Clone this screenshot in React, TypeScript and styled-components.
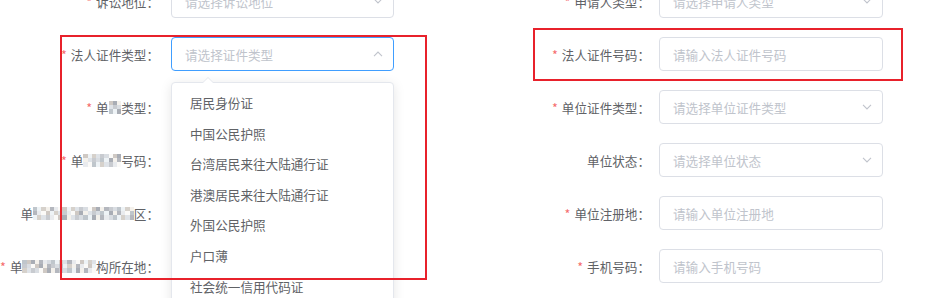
import React from 'react';
import styled, { createGlobalStyle } from 'styled-components';

const GlobalStyle = createGlobalStyle`
  html, body {
    margin: 0;
    padding: 0;
    background: #fff;
  }
  body {
    font-family: "Noto Sans CJK SC", "Noto Sans", sans-serif;
    overflow: hidden;
  }
`;

const Page = styled.div`
  position: relative;
  width: 945px;
  height: 298px;
  overflow: hidden;
`;

const Form = styled.div`
  display: grid;
  grid-template-columns: 394px 396px;
  column-gap: 93px;
  row-gap: 19px;
  margin-top: -16px;
`;

const Item = styled.div`
  display: flex;
  align-items: center;
  height: 34px;
`;

const Label = styled.label<{ $w: number; $gap: number; $required?: boolean }>`
  flex: 0 0 ${p => p.$w}px;
  width: ${p => p.$w}px;
  margin-right: ${p => p.$gap}px;
  display: flex;
  justify-content: flex-end;
  align-items: center;
  font-size: 12.6px;
  color: #606266;
  white-space: nowrap;

  &::before {
    content: ${p => (p.$required ? "'*'" : 'none')};
    color: #f56c6c;
    margin-right: 4px;
  }
`;

const Field = styled.div<{ $w: number; $focused?: boolean }>`
  position: relative;
  flex: 0 0 ${p => p.$w}px;
  width: ${p => p.$w}px;
  height: 34px;
  box-sizing: border-box;
  border: 1px solid ${p => (p.$focused ? '#409eff' : '#dcdfe6')};
  border-radius: 4px;
  background: #fff;
  display: flex;
  align-items: center;
  padding: 0 10px 0 13px;
  font-size: 12.6px;
  color: #c0c4cc;
`;

const Placeholder = styled.span`
  flex: 1;
  white-space: nowrap;
`;

const Chevron = styled.svg`
  width: 10px;
  height: 6px;
  flex: 0 0 auto;
`;

const Mosaic = styled.span<{ $cols: number }>`
  display: inline-grid;
  grid-template-columns: repeat(${p => p.$cols}, 1fr);
  grid-template-rows: repeat(3, 1fr);
  height: 13px;
`;

const Cell = styled.span<{ $c: string }>`
  background: ${p => p.$c};
`;

const Dropdown = styled.ul`
  position: absolute;
  top: calc(100% + 12px);
  left: -1px;
  width: 223px;
  box-sizing: border-box;
  margin: 0;
  padding: 5px 0;
  border: 1px solid #e4e7ed;
  border-radius: 4px;
  background: #fff;
  box-shadow: 0 2px 12px 0 rgba(0, 0, 0, 0.1);
  z-index: 5;

  &::before,
  &::after {
    content: '';
    position: absolute;
    left: 30px;
    border: 6px solid transparent;
    border-top-width: 0;
  }
  &::before {
    top: -6px;
    border-bottom-color: #e4e7ed;
  }
  &::after {
    top: -5px;
    border-bottom-color: #fff;
  }
`;

const Option = styled.li`
  list-style: none;
  height: 30.6px;
  line-height: 30.6px;
  padding: 0 18px;
  font-size: 12.6px;
  color: #606266;
  white-space: nowrap;
`;

const Highlight = styled.div`
  position: absolute;
  box-sizing: border-box;
  border: 2px solid #e8212b;
  pointer-events: none;
  z-index: 10;
`;

const PALETTE = [
  '#e9ebee', '#c8cbd0', '#b4b7be', '#dfe3e8', '#f4f1ec', '#d6d1cb',
  '#a9adb5', '#eef3f6', '#cfc9c4', '#bfc6cc', '#fbfaf8', '#d9dde2',
];

function Pixelated({ chars, seed }: { chars: number; seed: number }) {
  const cols = chars * 3;
  const cells = Array.from({ length: cols * 3 }, (_, i) => {
    const h = (i * 7919 + seed * 104729) % 9973;
    return PALETTE[h % PALETTE.length];
  });
  return (
    <Mosaic $cols={cols} style={{ width: chars * 12.6 }}>
      {cells.map((c, i) => <Cell key={i} $c={c} />)}
    </Mosaic>
  );
}

type Row = {
  label: Array<string | number>;
  required?: boolean;
  placeholder: string;
  select?: boolean;
  open?: boolean;
};

const OPTIONS = [
  '居民身份证',
  '中国公民护照',
  '台湾居民来往大陆通行证',
  '港澳居民来往大陆通行证',
  '外国公民护照',
  '户口薄',
  '社会统一信用代码证',
  '其他',
];

const LEFT: Row[] = [
  { label: ['诉讼地位'], required: true, placeholder: '请选择诉讼地位', select: true },
  { label: ['法人证件类型'], required: true, placeholder: '请选择证件类型', select: true, open: true },
  { label: ['单', 1, '类型'], required: true, placeholder: '请选择单位类型', select: true },
  { label: ['单', 3, '号码'], required: true, placeholder: '请输入单位证件号码' },
  { label: ['单', 8, '区'], placeholder: '请选择单位注册地址所在地区', select: true },
  { label: ['单', 6, '构所在地'], required: true, placeholder: '请选择单位主管机构所在地', select: true },
];

const RIGHT: Row[] = [
  { label: ['申请人类型'], required: true, placeholder: '请选择申请人类型', select: true },
  { label: ['法人证件号码'], required: true, placeholder: '请输入法人证件号码' },
  { label: ['单位证件类型'], required: true, placeholder: '请选择单位证件类型', select: true },
  { label: ['单位状态'], placeholder: '请选择单位状态', select: true },
  { label: ['单位注册地'], required: true, placeholder: '请输入单位注册地' },
  { label: ['手机号码'], required: true, placeholder: '请输入手机号码' },
];

function FormItem({ row, labelW, gap, fieldW, seed }: { row: Row; labelW: number; gap: number; fieldW: number; seed: number }) {
  return (
    <Item>
      <Label $w={labelW} $gap={gap} $required={row.required}>
        {row.label.map((part, i) =>
          typeof part === 'number'
            ? <Pixelated key={i} chars={part} seed={seed + i} />
            : <React.Fragment key={i}>{part}</React.Fragment>
        )}
        ：
      </Label>
      <Field $w={fieldW} $focused={row.open}>
        <Placeholder>{row.placeholder}</Placeholder>
        {row.select && (
          <Chevron viewBox="0 0 10 6">
            <path
              d={row.open ? 'M1 5.2 L5 1 L9 5.2' : 'M1 0.8 L5 5 L9 0.8'}
              fill="none"
              stroke="#c0c4cc"
              strokeWidth="1.1"
            />
          </Chevron>
        )}
        {row.open && (
          <Dropdown>
            {OPTIONS.map(o => <Option key={o}>{o}</Option>)}
          </Dropdown>
        )}
      </Field>
    </Item>
  );
}

export default function App() {
  return (
    <Page>
      <GlobalStyle />
      <Form>
        {LEFT.map((row, i) => (
          <React.Fragment key={i}>
            <FormItem row={row} labelW={159} gap={12} fieldW={223} seed={i * 13} />
            <FormItem row={RIGHT[i]} labelW={163} gap={9} fieldW={224} seed={i * 17} />
          </React.Fragment>
        ))}
      </Form>
      <Highlight style={{ left: 60, top: 35, width: 367, height: 245 }} />
      <Highlight style={{ left: 533, top: 28, width: 370, height: 53 }} />
    </Page>
  );
}
